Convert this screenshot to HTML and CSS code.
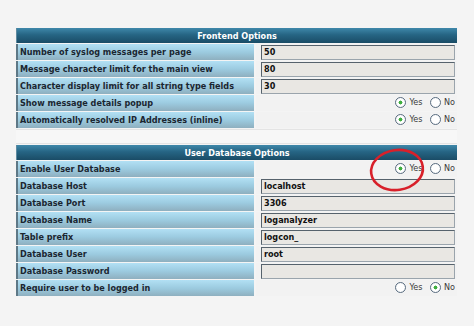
FILE: index.html
```html
<!DOCTYPE html>
<html lang="en">
<head>
    <meta charset="UTF-8">
    <title>LogAnalyzer Options</title>
    <link rel="stylesheet" href="styles.css">
</head>
<body>
    <div class="page">
        <table class="options">
            <colgroup>
                <col class="col-label">
                <col class="col-value">
            </colgroup>
            <tr class="row-head">
                <td class="head" colspan="2">Frontend Options</td>
            </tr>
            <tr>
                <td class="label">Number of syslog messages per page</td>
                <td class="value"><input class="field" type="text" value="50"></td>
            </tr>
            <tr>
                <td class="label">Message character limit for the main view</td>
                <td class="value"><input class="field" type="text" value="80"></td>
            </tr>
            <tr>
                <td class="label">Character display limit for all string type fields</td>
                <td class="value"><input class="field" type="text" value="30"></td>
            </tr>
            <tr>
                <td class="label">Show message details popup</td>
                <td class="value choice">
                    <label><input type="radio" name="popup" checked> Yes</label>
                    <label><input type="radio" name="popup"> No</label>
                </td>
            </tr>
            <tr>
                <td class="label">Automatically resolved IP Addresses (inline)</td>
                <td class="value choice">
                    <label><input type="radio" name="resolve" checked> Yes</label>
                    <label><input type="radio" name="resolve"> No</label>
                </td>
            </tr>
            <tr class="row-blank">
                <td class="blank" colspan="2"></td>
            </tr>
            <tr class="row-head">
                <td class="head" colspan="2">User Database Options</td>
            </tr>
            <tr>
                <td class="label">Enable User Database</td>
                <td class="value choice">
                    <label><input type="radio" name="userdb" checked> Yes</label>
                    <label><input type="radio" name="userdb"> No</label>
                </td>
            </tr>
            <tr>
                <td class="label">Database Host</td>
                <td class="value"><input class="field" type="text" value="localhost"></td>
            </tr>
            <tr>
                <td class="label">Database Port</td>
                <td class="value"><input class="field" type="text" value="3306"></td>
            </tr>
            <tr>
                <td class="label">Database Name</td>
                <td class="value"><input class="field" type="text" value="loganalyzer"></td>
            </tr>
            <tr>
                <td class="label">Table prefix</td>
                <td class="value"><input class="field" type="text" value="logcon_"></td>
            </tr>
            <tr>
                <td class="label">Database User</td>
                <td class="value"><input class="field" type="text" value="root"></td>
            </tr>
            <tr>
                <td class="label">Database Password</td>
                <td class="value"><input class="field" type="password" value=""></td>
            </tr>
            <tr>
                <td class="label">Require user to be logged in</td>
                <td class="value choice">
                    <label><input type="radio" name="login"> Yes</label>
                    <label><input type="radio" name="login" checked> No</label>
                </td>
            </tr>
        </table>

        <!-- hand drawn marker around the option -->
        <svg class="circle" width="60" height="48" viewBox="0 0 60 48">
            <ellipse cx="30" cy="24" rx="26" ry="20" fill="none" stroke="#d8202a" stroke-width="2.6" transform="rotate(-8 30 24)"/>
        </svg>
    </div>
</body>
</html>
```

FILE: styles.css
```css
body {
    margin: 0;
    background-color: #f4f4f4;
}

.page {
    position: relative;
    width: 474px;
    height: 326px;
    padding-top: 27px;
    box-sizing: border-box;
}

.options {
    margin-left: 16px;
    width: 441px;
    table-layout: fixed;
    border-collapse: separate;
    border-spacing: 0 1px;
    font-family: "DejaVu Sans Condensed", "DejaVu Sans", sans-serif;
    font-size: 9px;
}

.col-label {
    width: 240px;
}

.options tr {
    height: 16px;
}

.options td {
    padding: 0;
    box-sizing: border-box;
}

.options .row-head {
    height: 15px;
}

.options .row-blank {
    height: 15px;
}

.head {
    background: linear-gradient(#3f88aa, #266584 45%, #1a4c66);
    color: #ffffff;
    font-weight: bold;
    text-align: center;
    border-left: 1px solid #5d8aa0;
}

.label {
    padding-left: 2px !important;
    background: linear-gradient(#b2e0f4, #9ccbe0 50%, #8eafbf);
    border-left: 2px solid #5e7886;
    border-right: 2px solid #f4f4f4;
    color: #1b2630;
    font-weight: bold;
    white-space: nowrap;
    overflow: hidden;
}

.value {
    background-color: #f2f2f2;
    padding: 0 2px 0 5px !important;
}

.blank {
    background-color: #f7f7f7;
    border-top: 1px solid #e4e4e4;
    border-bottom: 1px solid #e4e4e4;
}

.field {
    display: block;
    width: 100%;
    height: 15px;
    box-sizing: border-box;
    margin: 0;
    padding: 0 2px;
    border: 1px solid #56626c;
    border-right-color: #9aa4ac;
    border-bottom-color: #9aa4ac;
    background-color: #e9e7e3;
    font-family: "DejaVu Sans Condensed", "DejaVu Sans", sans-serif;
    font-size: 9px;
    font-weight: bold;
    color: #111111;
}

.choice {
    text-align: right;
    color: #3a3a3a;
    white-space: nowrap;
}

.choice label {
    display: inline-flex;
    align-items: center;
    margin-left: 5px;
    font-size: 9px;
}

.choice input {
    appearance: none;
    width: 11px;
    height: 11px;
    margin: 0 3px 0 0;
    border: 1px solid #5a6d80;
    border-radius: 50%;
    background: radial-gradient(#ffffff 55%, #dfe4ea);
}

.choice input:checked {
    background: radial-gradient(#3fae3f 28%, #ffffff 34%, #ffffff 60%, #dfe4ea);
}

.circle {
    position: absolute;
    left: 367px;
    top: 146px;
}
```
